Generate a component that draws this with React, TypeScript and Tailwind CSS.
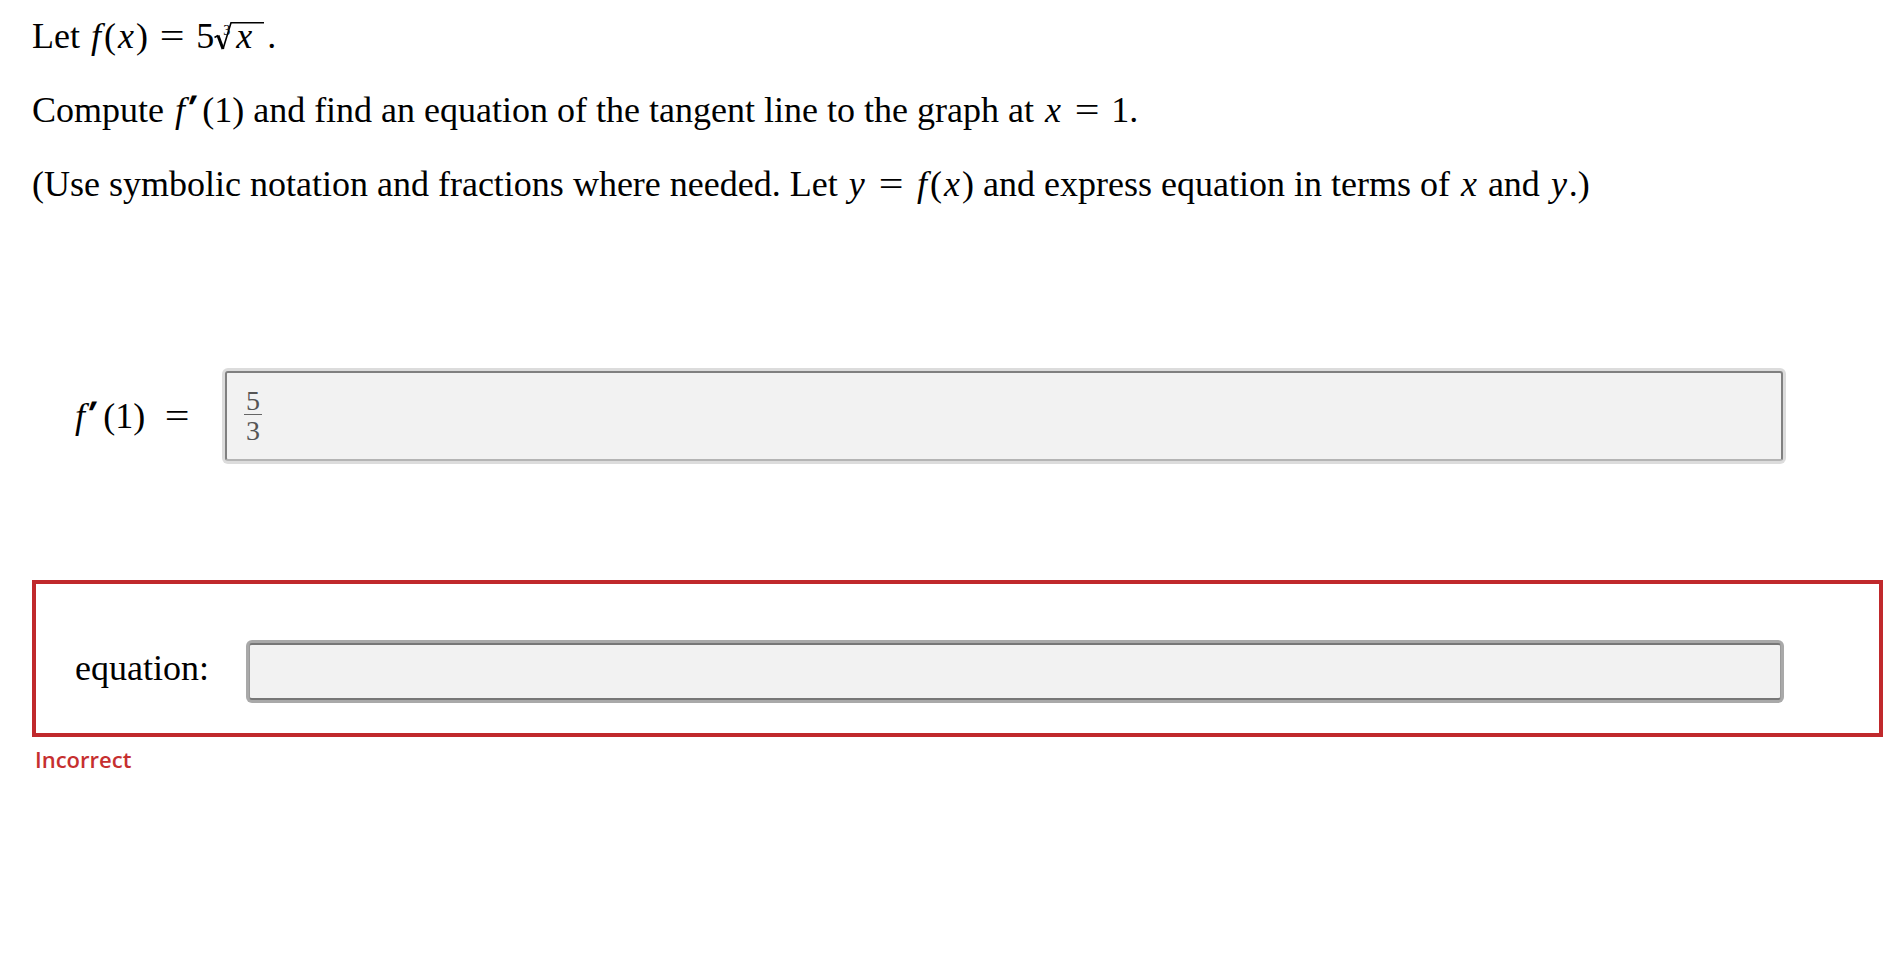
import React from "react";

const F = () => <span className="italic ml-[2px] mr-[3px]">f</span>;
const X = () => <span className="italic mx-[2px]">x</span>;
const Y = () => <span className="italic mx-[2px]">y</span>;

const Eq = ({ cls = "mx-[14px]" }: { cls?: string }) => (
  <span className={`inline-block scale-x-[1.22] ${cls}`}>=</span>
);

const Prime = ({ cls = "mr-[5px]" }: { cls?: string }) => (
  <span
    className={`relative -top-[3px] ml-[-1px] inline-block -skew-x-[12deg] font-['Liberation_Sans',sans-serif] text-[34px] font-bold ${cls}`}
  >
    ′
  </span>
);

const CubeRootX = () => (
  <span className="relative inline-block w-[50px] pl-[22px] align-baseline">
    <svg
      className="absolute left-0 top-0"
      width="50"
      height="74"
      viewBox="0 0 50 74"
      fill="none"
    >
      <path d="M0.5 38.5 L4 36.5" stroke="#000" strokeWidth="1.6" />
      <path d="M4 36.5 L9 50" stroke="#000" strokeWidth="3" />
      <path d="M9 50 L17 23.8 L50 23.8" stroke="#000" strokeWidth="1.6" />
    </svg>
    <span className="absolute left-[9px] top-[25px] text-[14px] leading-[14px]">3</span>
    <span className="italic">x</span>
  </span>
);

const Fraction = () => (
  <span className="inline-flex flex-col items-center text-[28px] text-[#555555]">
    <span className="leading-[22px]">5</span>
    <span className="mt-[2px] h-px w-[18px] bg-[#666666]" />
    <span className="mt-[5px] leading-[22px]">3</span>
  </span>
);

export default function App() {
  return (
    <div className="min-h-screen w-full bg-white pl-[32px] font-['Liberation_Serif','Times_New_Roman',serif] text-[36px] text-black">
      <p className="-mt-px leading-[74px] whitespace-nowrap">
        Let <F />(<X />)<Eq />5<CubeRootX />
        <span className="ml-[3px]">.</span>
      </p>
      <p className="leading-[74px] whitespace-nowrap">
        Compute <F />
        <Prime cls="mr-[7px]" />
        (1) and find an equation of the tangent line to the graph at <X />
        <Eq />1.
      </p>
      <p className="leading-[74px] whitespace-nowrap">
        (Use symbolic notation and fractions where needed. Let <Y />
        <Eq />
        <F />(<X />) and express equation in terms of <X /> and <Y />.)
      </p>

      <div className="mt-[147px] flex items-start pl-[41px]">
        <div className="w-[149px] shrink-0 pt-[28px] leading-[40px] whitespace-nowrap">
          <F />
          <Prime cls="mr-[8px]" />
          (1)
          <Eq cls="ml-[22px]" />
        </div>
        <div className="h-[96px] w-[1564px] shrink-0 rounded-[6px] bg-[#dcdcdc] p-[3px]">
          <div className="flex h-full items-center rounded-[3px] border-2 border-[#808080] border-b-[#b4b4b4] bg-[#f2f2f2] pl-[17px]">
            <Fraction />
          </div>
        </div>
      </div>

      <div className="mt-[116px] w-[1851px] border-4 border-[#c0292c] pl-[39px] pt-[56px] pb-[30px]">
        <div className="flex items-start">
          <div className="w-[171px] shrink-0 pt-[8px] leading-[40px] whitespace-nowrap">
            equation:
          </div>
          <div className="h-[63px] w-[1538px] shrink-0 rounded-[6px] bg-[#a9a9a9] p-[3px]">
            <div className="h-full rounded-[3px] border-x border-y-2 border-x-[#9a9a9a] border-y-[#777777] bg-[#f2f2f2]" />
          </div>
        </div>
      </div>

      <div className="mt-[7px] ml-[3px] font-['Open_Sans',sans-serif] text-[22px] font-semibold leading-[30px] text-[#c62f2f]">
        Incorrect
      </div>
    </div>
  );
}
